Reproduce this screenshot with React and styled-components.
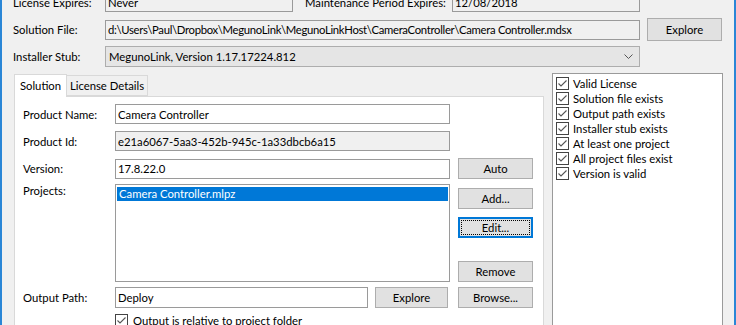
import React from 'react';
import styled, { createGlobalStyle, css } from 'styled-components';

const GlobalStyle = createGlobalStyle`
  html, body {
    margin: 0;
    padding: 0;
    background: #f0f0f0;
  }
  body {
    font-family: Lato, "Liberation Sans", sans-serif;
    font-size: 11.3px;
    color: #000;
  }
`;

const CHECKS = [
  'Valid License',
  'Solution file exists',
  'Output path exists',
  'Installer stub exists',
  'At least one project',
  'All project files exist',
  'Version is valid'
];

const Window = styled.div`
  width: 736px;
  height: 325px;
  box-sizing: border-box;
  overflow: hidden;
  background: #f0f0f0;
  border-left: 2px solid #2a86d6;
  border-right: 2px solid #2a86d6;
  padding-left: 11px;
`;

const Content = styled.div`
  margin-top: -8px;
  display: flex;
  flex-direction: column;
`;

const Row = styled.div`
  display: flex;
  align-items: center;
  height: ${p => p.h || 20}px;
  margin-top: ${p => p.mt || 0}px;
`;

const Label = styled.div`
  width: ${p => p.w || 92}px;
  margin-left: ${p => p.ml || 0}px;
  white-space: nowrap;
  flex-shrink: 0;
`;

const TextBox = styled.div`
  box-sizing: border-box;
  width: ${p => p.w}px;
  height: ${p => p.h || 20}px;
  flex-shrink: 0;
  border: 1px solid #9a9a9a;
  background: ${p => (p.readOnly ? '#f0f0f0' : '#fff')};
  padding: 0 2px;
  display: flex;
  align-items: center;
  white-space: nowrap;
  overflow: hidden;
  letter-spacing: ${p => (p.tight ? '-0.3px' : 'normal')};
`;

const Combo = styled.div`
  box-sizing: border-box;
  width: 535px;
  height: 21px;
  border: 1px solid #adadad;
  background: #e5e5e5;
  padding: 0 6px 0 3px;
  display: flex;
  align-items: center;
  justify-content: space-between;
`;

const Button = styled.div`
  box-sizing: border-box;
  width: ${p => p.w || 75}px;
  height: ${p => p.h || 21}px;
  margin-left: ${p => p.ml || 0}px;
  flex-shrink: 0;
  border: 1px solid #adadad;
  background: #e1e1e1;
  display: flex;
  align-items: center;
  justify-content: center;
  position: relative;
  ${p =>
    p.focused &&
    css`
      border: 2px solid #0078d7;
      &::after {
        content: '';
        position: absolute;
        inset: 1px;
        border: 1px dotted #000;
      }
    `}
`;

const Bottom = styled.div`
  display: flex;
  margin-top: 6px;
  margin-left: 1px;
`;

const TabControl = styled.div`
  width: 530px;
  display: flex;
  flex-direction: column;
`;

const TabStrip = styled.div`
  display: flex;
  align-items: flex-end;
  height: 23px;
`;

const Tab = styled.div`
  box-sizing: border-box;
  width: ${p => p.w}px;
  height: ${p => (p.active ? 23 : 21)}px;
  padding-bottom: ${p => (p.active ? 2 : 0)}px;
  border: 1px solid #d9d9d9;
  border-bottom: ${p => (p.active ? 'none' : '1px solid #d9d9d9')};
  border-left: ${p => (p.active ? '1px solid #d9d9d9' : 'none')};
  background: ${p => (p.active ? '#fff' : '#f0f0f0')};
  display: flex;
  align-items: center;
  justify-content: center;
  margin-bottom: ${p => (p.active ? '-1px' : '0')};
  position: relative;
  z-index: ${p => (p.active ? 1 : 0)};
`;

const Panel = styled.div`
  box-sizing: border-box;
  height: 240px;
  background: #fff;
  border: 1px solid #d9d9d9;
  padding: 7px 0 0 8px;
  display: flex;
  flex-direction: column;
`;

const PanelRow = styled.div`
  display: flex;
  align-items: ${p => (p.top ? 'flex-start' : 'center')};
  margin-top: ${p => p.mt || 0}px;
`;

const ListBox = styled.div`
  box-sizing: border-box;
  width: 335px;
  height: 98px;
  border: 1px solid #9a9a9a;
  background: #fff;
  padding: 2px 1px;
`;

const ListItem = styled.div`
  height: 14px;
  line-height: 14px;
  padding-left: 2px;
  background: ${p => (p.selected ? '#0078d7' : 'transparent')};
  color: ${p => (p.selected ? '#fff' : '#000')};
`;

const ButtonColumn = styled.div`
  display: flex;
  flex-direction: column;
  height: 98px;
  margin-left: 8px;
  padding-top: 4px;
  box-sizing: border-box;
  gap: 8px;
`;

const Spacer = styled.div`
  flex: 1;
`;

const CheckRow = styled.div`
  display: flex;
  align-items: center;
  height: 15px;
  gap: ${p => p.gap || 4}px;
  margin-left: ${p => p.ml || 0}px;
  margin-top: ${p => p.mt || 0}px;
  white-space: nowrap;
`;

const CheckList = styled.div`
  box-sizing: border-box;
  width: 171px;
  height: 260px;
  margin-left: 8px;
  border: 1px solid #9a9a9a;
  background: #fff;
  padding: 2px 3px;
`;

const CheckBox = () => (
  <svg width="13" height="13" viewBox="0 0 13 13">
    <rect x="0.5" y="0.5" width="12" height="12" fill="#fff" stroke="#444" />
    <path d="M2.5 6.5 L5 9 L10.5 3.5" fill="none" stroke="#555" strokeWidth="1.1" />
  </svg>
);

const Chevron = () => (
  <svg width="9" height="5" viewBox="0 0 9 5">
    <path d="M0.5 0.5 L4.5 4.5 L8.5 0.5" fill="none" stroke="#555" strokeWidth="1" />
  </svg>
);

export default function App() {
  return (
    <Window>
      <GlobalStyle />
      <Content>
        <Row>
          <Label>License Expires:</Label>
          <TextBox w={188} readOnly>Never</TextBox>
          <Label w={147} ml={12}>Maintenance Period Expires:</Label>
          <TextBox w={188} readOnly>12/08/2018</TextBox>
        </Row>

        <Row h={23} mt={6}>
          <Label>Solution File:</Label>
          <TextBox w={535} readOnly tight>
            d:\Users\Paul\Dropbox\MegunoLink\MegunoLinkHost\CameraController\Camera Controller.mdsx
          </TextBox>
          <Button w={75} h={23} ml={7}>Explore</Button>
        </Row>

        <Row h={21} mt={5}>
          <Label>Installer Stub:</Label>
          <Combo>
            <span>MegunoLink, Version 1.17.17224.812</span>
            <Chevron />
          </Combo>
        </Row>

        <Bottom>
          <TabControl>
            <TabStrip>
              <Tab active w={53}>Solution</Tab>
              <Tab w={81}>License Details</Tab>
            </TabStrip>
            <Panel>
              <PanelRow>
                <Label>Product Name:</Label>
                <TextBox w={335}>Camera Controller</TextBox>
              </PanelRow>
              <PanelRow mt={7}>
                <Label>Product Id:</Label>
                <TextBox w={335} readOnly>e21a6067-5aa3-452b-945c-1a33dbcb6a15</TextBox>
              </PanelRow>
              <PanelRow mt={7}>
                <Label>Version:</Label>
                <TextBox w={335}>17.8.22.0</TextBox>
                <Button ml={8}>Auto</Button>
              </PanelRow>
              <PanelRow top mt={5}>
                <Label>Projects:</Label>
                <ListBox>
                  <ListItem selected>Camera Controller.mlpz</ListItem>
                </ListBox>
                <ButtonColumn>
                  <Button>Add...</Button>
                  <Button focused>Edit...</Button>
                  <Spacer />
                  <Button>Remove</Button>
                </ButtonColumn>
              </PanelRow>
              <PanelRow mt={5}>
                <Label>Output Path:</Label>
                <TextBox w={253} h={21}>Deploy</TextBox>
                <Button w={73} ml={7}>Explore</Button>
                <Button ml={10}>Browse...</Button>
              </PanelRow>
              <CheckRow ml={92} mt={5} gap={5}>
                <CheckBox />
                <span>Output is relative to project folder</span>
              </CheckRow>
            </Panel>
          </TabControl>

          <CheckList>
            {CHECKS.map(item => (
              <CheckRow key={item}>
                <CheckBox />
                <span>{item}</span>
              </CheckRow>
            ))}
          </CheckList>
        </Bottom>
      </Content>
    </Window>
  );
}
